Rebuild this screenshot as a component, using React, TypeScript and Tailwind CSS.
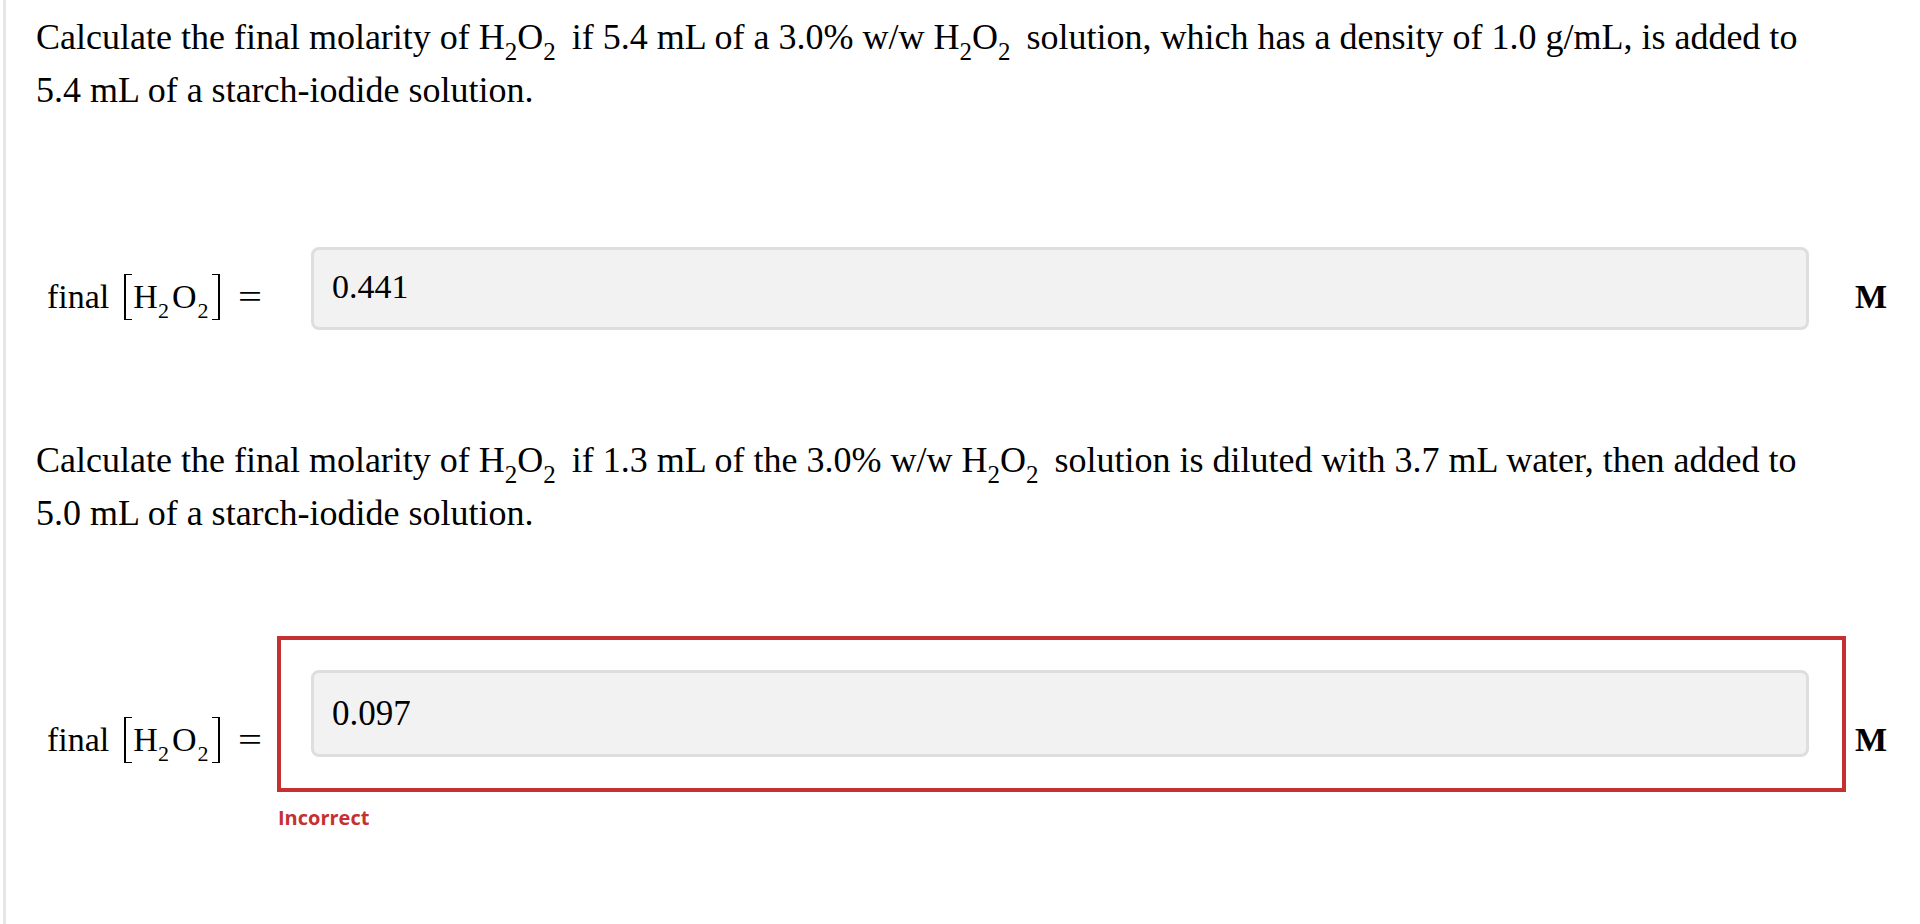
import React from "react";

const Sub = () => <span className="text-[25px] leading-[20px] align-[-11px]">2</span>;

const H2O2 = () => (
  <span className="mr-[7px]">
    H<Sub />O<Sub />
  </span>
);

const Label = () => (
  <div className="flex items-center h-[46px] pl-[11px] text-[34px] leading-none">
    <span className="mr-[15px]">final</span>
    <span className="block h-[46px] w-[8px] border-l-[2px] border-y-[1.5px] border-black" />
    <span className="h-[34px] ml-[1px] whitespace-nowrap">
      H<span className="text-[22px] leading-[16px] align-[-10px]">2</span>
      <span className="ml-[3px]">O</span>
      <span className="text-[22px] leading-[16px] align-[-10px] ml-[1px]">2</span>
    </span>
    <span className="block h-[46px] w-[8px] ml-[4px] border-r-[2px] border-y-[1.5px] border-black" />
    <span className="inline-block ml-[18px] scale-x-[1.25] origin-left">=</span>
  </div>
);

const Unit = () => (
  <div className="flex items-center h-[46px] ml-[9px] text-[34px] font-bold leading-none">M</div>
);

export default function App() {
  return (
    <div className="min-h-screen bg-white flex font-['Liberation_Serif',serif] text-black">
      <div className="w-[3px]" />
      <div className="flex-1 border-l-[3px] border-[#e6e6e6] pl-[30px] pt-[11px] min-h-[924px]">
        <p className="w-[1784px] text-[36px] leading-[53px]">
          Calculate the final molarity of <H2O2 /> if 5.4 mL of a 3.0% w/w <H2O2 /> solution, which
          has a density of 1.0 g/mL, is added to 5.4 mL of a starch-iodide solution.
        </p>

        <div className="flex items-start mt-[96px]">
          <div className="w-[241px] mt-[61px]">
            <Label />
          </div>
          <div className="w-[1569px] border-4 border-transparent pt-[30px] pl-[30px] pr-[33px] pb-[31px]">
            <div className="h-[83px] rounded-[8px] border-[3px] border-[#dedede] bg-[#f2f2f2] pl-[18px] pt-[17px] text-[34px] leading-[40px]">
              0.441
            </div>
          </div>
          <div className="mt-[61px]">
            <Unit />
          </div>
        </div>

        <p className="w-[1784px] mt-[69px] text-[36px] leading-[53px]">
          Calculate the final molarity of <H2O2 /> if 1.3 mL of the 3.0% w/w <H2O2 /> solution is
          diluted with 3.7 mL water, then added to 5.0 mL of a starch-iodide solution.
        </p>

        <div className="flex items-start mt-[96px]">
          <div className="w-[241px] mt-[81px]">
            <Label />
          </div>
          <div className="w-[1569px] border-4 border-[#c53030] pt-[30px] pl-[30px] pr-[33px] pb-[31px]">
            <div className="h-[87px] rounded-[8px] border-[3px] border-[#dedede] bg-[#f2f2f2] pl-[18px] pt-[21px] text-[35px] leading-[40px]">
              0.097
            </div>
          </div>
          <div className="mt-[81px]">
            <Unit />
          </div>
        </div>
        <div className="ml-[242px] mt-[12px] font-['Open_Sans',sans-serif] font-bold text-[20px] leading-[28px] text-[#c53030]">
          Incorrect
        </div>
      </div>
    </div>
  );
}
